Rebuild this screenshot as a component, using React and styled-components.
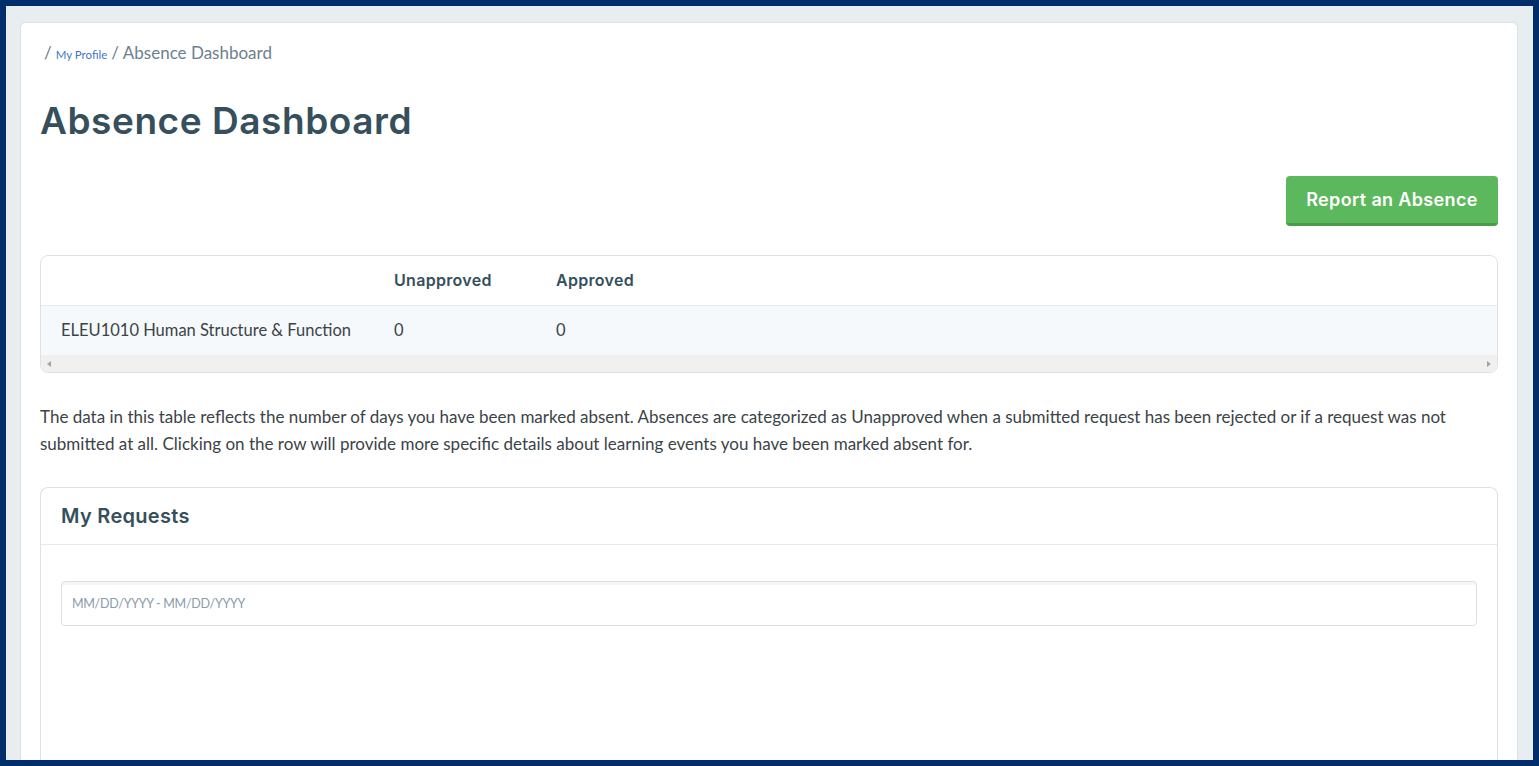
import React from "react";
import styled, { createGlobalStyle } from "styled-components";

const GlobalStyle = createGlobalStyle`
  html, body {
    margin: 0;
    padding: 0;
    background: #012d6b;
  }
  * {
    box-sizing: border-box;
  }
`;

const Frame = styled.div`
  height: 766px;
  padding: 6px;
  background: #012d6b;
`;

const Backdrop = styled.div`
  height: 100%;
  background: #e8edf2;
  padding: 16px 15px 0 14px;
  overflow: hidden;
`;

const Page = styled.main`
  background: #fff;
  border: 1px solid #dde2e6;
  border-bottom: none;
  border-radius: 6px 6px 0 0;
  min-height: 100%;
  padding: 18px 19px 0 19px;
  font-family: Lato, "Noto Sans", sans-serif;
  color: #3b4348;
`;

const Breadcrumb = styled.nav`
  display: flex;
  align-items: baseline;
  gap: 4px;
  font-size: 17px;
  line-height: 24px;
  color: #6d7f8e;
  padding-left: 4px;
`;

const Crumb = styled.a`
  font-size: 11.5px;
  color: #3f78c9;
  text-decoration: none;
`;

const Title = styled.h1`
  font-family: Inter, sans-serif;
  font-weight: 600;
  font-size: 37px;
  letter-spacing: 0.55px;
  line-height: 44px;
  color: #35505c;
  margin: 32px 0 0 0;
`;

const Actions = styled.div`
  display: flex;
  justify-content: flex-end;
  margin-top: 33px;
`;

const GreenButton = styled.button`
  font-family: Inter, sans-serif;
  font-weight: 600;
  font-size: 18px;
  letter-spacing: 0.35px;
  color: #fff;
  background: #5cb85c;
  border: none;
  border-bottom: 3px solid #4a9a4a;
  border-radius: 4px;
  height: 50px;
  width: 212px;
  cursor: pointer;
`;

const TableCard = styled.div`
  margin-top: 29px;
  border: 1px solid #dde2e6;
  border-radius: 8px;
  overflow: hidden;
`;

const Table = styled.table`
  width: 100%;
  border-collapse: collapse;
`;

const Th = styled.th`
  font-family: Inter, sans-serif;
  font-weight: 600;
  font-size: 16px;
  letter-spacing: 0.3px;
  color: #35505c;
  text-align: left;
  height: 49px;
  padding: 0 20px;
  border-bottom: 1px solid #e6eaed;
  width: ${(p) => p.$w || "auto"};
`;

const Td = styled.td`
  font-size: 16.5px;
  color: #3b4348;
  height: 50px;
  padding: 0 20px;
  background: #f5f9fc;
`;

const Scrollbar = styled.div`
  height: 17px;
  background: #f0f0f0;
  display: flex;
  align-items: center;
  justify-content: space-between;
  padding: 0 6px;
`;

const Arrow = styled.span`
  width: 0;
  height: 0;
  border-top: 3px solid transparent;
  border-bottom: 3px solid transparent;
  ${(p) =>
    p.$dir === "left"
      ? "border-right: 4px solid #a3a3a3;"
      : "border-left: 4px solid #a3a3a3;"}
`;

const Note = styled.p`
  font-size: 17px;
  line-height: 27px;
  color: #3b4348;
  margin: 30px 0 0 0;
`;

const Panel = styled.section`
  margin-top: 30px;
  border: 1px solid #dde2e6;
  border-bottom: none;
  border-radius: 8px 8px 0 0;
  min-height: 280px;
`;

const PanelHeader = styled.header`
  height: 57px;
  display: flex;
  align-items: center;
  padding: 0 20px;
  border-bottom: 1px solid #e6eaed;
`;

const PanelTitle = styled.h2`
  font-family: Inter, sans-serif;
  font-weight: 600;
  font-size: 20px;
  letter-spacing: 0.3px;
  color: #35505c;
  margin: 0;
`;

const PanelBody = styled.div`
  padding: 36px 20px 0 20px;
`;

const DateInput = styled.input`
  width: 100%;
  height: 45px;
  border: 1px solid #dcdfe3;
  border-radius: 4px;
  box-shadow: inset 0 3px 0 #f4f6f8;
  padding: 0 10px;
  font-family: Lato, "Noto Sans", sans-serif;
  font-size: 12.5px;
  letter-spacing: -0.3px;
  color: #3b4348;
  outline: none;
  &::placeholder {
    color: #8a9bab;
  }
`;

const rows = [
  { course: "ELEU1010 Human Structure & Function", unapproved: 0, approved: 0 },
];

export default function App() {
  return (
    <>
      <GlobalStyle />
      <Frame>
        <Backdrop>
          <Page>
            <Breadcrumb>
              <span>/</span>
              <Crumb href="#">My Profile</Crumb>
              <span>/ Absence Dashboard</span>
            </Breadcrumb>
            <Title>Absence Dashboard</Title>
            <Actions>
              <GreenButton>Report an Absence</GreenButton>
            </Actions>
            <TableCard>
              <Table>
                <thead>
                  <tr>
                    <Th $w="333px"></Th>
                    <Th $w="162px">Unapproved</Th>
                    <Th>Approved</Th>
                  </tr>
                </thead>
                <tbody>
                  {rows.map((r) => (
                    <tr key={r.course}>
                      <Td>{r.course}</Td>
                      <Td>{r.unapproved}</Td>
                      <Td>{r.approved}</Td>
                    </tr>
                  ))}
                </tbody>
              </Table>
              <Scrollbar>
                <Arrow $dir="left" />
                <Arrow $dir="right" />
              </Scrollbar>
            </TableCard>
            <Note>
              The data in this table reflects the number of days you have been
              marked absent. Absences are categorized as Unapproved when a
              submitted request has been rejected or if a request was not
              submitted at all. Clicking on the row will provide more specific
              details about learning events you have been marked absent for.
            </Note>
            <Panel>
              <PanelHeader>
                <PanelTitle>My Requests</PanelTitle>
              </PanelHeader>
              <PanelBody>
                <DateInput placeholder="MM/DD/YYYY - MM/DD/YYYY" />
              </PanelBody>
            </Panel>
          </Page>
        </Backdrop>
      </Frame>
    </>
  );
}
